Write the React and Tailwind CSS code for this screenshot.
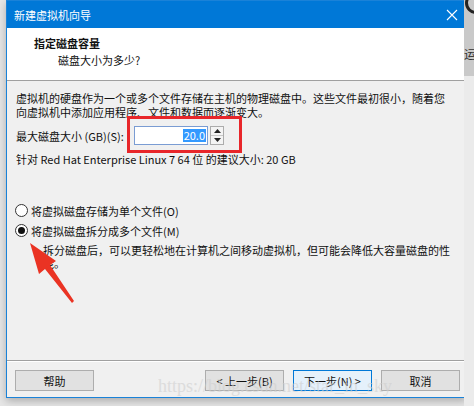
export default function App() {
  const font = { fontFamily: '"Noto Sans CJK SC", "Liberation Sans", sans-serif' };

  return (
    <div className="relative w-[474px] h-[406px] overflow-hidden bg-[#e6e6e6] text-[11px] text-[#111]" style={font}>
      {/* window behind, on the right */}
      <div className="absolute right-0 top-0 w-[10px] h-[406px] bg-[#ebebeb]">
        <div className="h-[76px] bg-[#c9c9c9] relative overflow-hidden">
          <div className="absolute left-[1px] -top-[8px] w-[22px] h-[22px] rounded-full border-[3px] border-[#222]" />
          <div className="absolute left-[0px] top-[47px] text-[12px] leading-[14px] text-[#333]">运</div>
        </div>
      </div>

      {/* wizard window */}
      <div className="ml-[6px] w-[461px] h-[398px] border border-[#1a82d8] flex flex-col bg-[#f0f0f0] shadow-[0_3px_8px_rgba(0,0,0,0.25)]">
        {/* title bar */}
        <div className="h-[27px] bg-[#0078d7] flex items-center justify-between pl-[7px] pr-[7px] text-white">
          <span className="text-[11px] leading-[14px]">新建虚拟机向导</span>
          <svg width="12" height="12" viewBox="0 0 12 12" className="mr-[1px]">
            <path d="M1 1 L11 11 M11 1 L1 11" stroke="white" strokeWidth="1.1" />
          </svg>
        </div>

        {/* header */}
        <div className="h-[53px] bg-white border-b border-[#a0a0a0] pt-[7px] pl-[27px]">
          <div className="font-bold leading-[16px]">指定磁盘容量</div>
          <div className="pl-[24px] mt-[1px] leading-[16px]">磁盘大小为多少?</div>
        </div>

        {/* body */}
        <div className="flex-1 pl-[9px] pr-[8px] pt-[10px] flex flex-col">
          <div className="leading-[14px]">
            虚拟机的硬盘作为一个或多个文件存储在主机的物理磁盘中。这些文件最初很小，随着您
            <br />
            向虚拟机中添加应用程序、文件和数据而逐渐变大。
          </div>

          <div className="flex items-center mt-[7px] h-[19px]">
            <span className="leading-[14px] w-[118px]">最大磁盘大小 (GB)(S):</span>
            <div className="relative flex items-center">
              <div className="absolute -left-[7px] -top-[10px] w-[115px] h-[37px] border-[3px] border-[#e8262a]" />
              <div className="w-[74px] h-[19px] bg-white border border-[#7a9cd3] flex items-center justify-end pr-[1px]">
                <span className="bg-[#3399ff] text-white leading-[13px] px-[1px]">20.0</span>
              </div>
              <div className="ml-[2px] w-[14px] h-[19px] flex flex-col border border-[#acacac] bg-[#f4f4f4]">
                <div className="flex-1 flex items-center justify-center border-b border-[#c8c8c8]">
                  <svg width="7" height="4" viewBox="0 0 7 4"><path d="M0 4 L3.5 0 L7 4 Z" fill="#222" /></svg>
                </div>
                <div className="flex-1 flex items-center justify-center">
                  <svg width="7" height="4" viewBox="0 0 7 4"><path d="M0 0 L3.5 4 L7 0 Z" fill="#222" /></svg>
                </div>
              </div>
            </div>
          </div>

          <div className="mt-[7px] leading-[14px]">针对 Red Hat Enterprise Linux 7 64 位 的建议大小: 20 GB</div>

          <div className="mt-[37px] flex flex-col gap-[5px]">
            <label className="flex items-center h-[15px] -ml-[1px]">
              <span className="w-[13px] h-[13px] rounded-full border border-[#333] bg-white" />
              <span className="ml-[3px] leading-[14px]">将虚拟磁盘存储为单个文件(O)</span>
            </label>
            <label className="flex items-center h-[15px] -ml-[1px]">
              <span className="w-[13px] h-[13px] rounded-full border border-[#333] bg-white flex items-center justify-center">
                <span className="w-[7px] h-[7px] rounded-full bg-[#111]" />
              </span>
              <span className="ml-[3px] leading-[14px]">将虚拟磁盘拆分成多个文件(M)</span>
            </label>
          </div>

          <div className="pl-[27px] mt-[6px] leading-[13px]">
            拆分磁盘后，可以更轻松地在计算机之间移动虚拟机，但可能会降低大容量磁盘的性
            <br />
            能。
          </div>
        </div>

        {/* footer */}
        <div className="h-[37px] border-t border-[#a0a0a0] shadow-[inset_0_1px_0_#ffffff] flex items-start pt-[9px] pl-[8px] pr-[6px]">
          <button className="w-[79px] h-[21px] bg-[#e1e1e1] border border-[#adadad] leading-[14px]">帮助</button>
          <div className="flex-1" />
          <button className="w-[79px] h-[21px] bg-[#e1e1e1] border border-[#adadad] leading-[14px]">&lt; 上一步(B)</button>
          <button className="ml-[9px] w-[79px] h-[21px] bg-[#e5f1fb] border border-[#0078d7] leading-[14px]">下一步(N) &gt;</button>
          <button className="ml-[9px] w-[79px] h-[21px] bg-[#e1e1e1] border border-[#adadad] leading-[14px]">取消</button>
        </div>
      </div>

      {/* watermark */}
      <div
        className="absolute left-[158px] top-[376px] text-[18px] leading-[20px] text-[#cfcfcf] opacity-60 pointer-events-none"
        style={{ fontFamily: '"Liberation Serif", serif' }}
      >
        https://blog.csdn.net/star_in_sky
      </div>

      {/* red arrow annotation */}
      <svg className="absolute left-0 top-0 pointer-events-none" width="474" height="406">
        <polygon
          points="30,243 56,261 50,265 74,301 72,303 45,269 39,274"
          fill="#ea3323"
        />
      </svg>
    </div>
  );
}
